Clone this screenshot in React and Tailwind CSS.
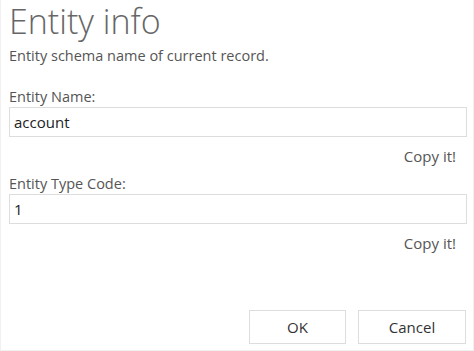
import React from 'react';

const Field = ({ label, value, first }) => (
  <div className={first ? 'mt-[21px]' : 'mt-[8px]'}>
    <label className="block text-[14.5px] leading-[20px] text-[#555]">{label}</label>
    <input
      readOnly
      value={value}
      className="block w-full h-[30px] border border-[#ddd] px-[4px] text-[15px] text-[#222] outline-none"
    />
    <div className="flex justify-end pr-[11px] mt-[9px]">
      <button className="text-[15px] leading-[20px] text-[#555]">Copy it!</button>
    </div>
  </div>
);

const App = () => {
  return (
    <div
      className="w-[474px] h-[351px] bg-white flex flex-col pl-2 pr-[6px] border-x border-b border-[#f0f0f0]"
      style={{ fontFamily: '"Open Sans", "Noto Sans", sans-serif' }}
    >
      <h1 className="-mt-[2px] text-[34px] leading-[46px] font-light text-[#666]">Entity info</h1>
      <p className="mt-[2px] text-[14.5px] leading-[20px] text-[#555]">
        Entity schema name of current record.
      </p>

      <Field first label="Entity Name:" value="account" />
      <Field label="Entity Type Code:" value="1" />

      <div className="mt-auto mb-[6px] flex justify-end gap-[12px] pr-[1px]">
        <button className="w-[97px] h-[34px] border border-[#ddd] text-[15px] text-[#333]">OK</button>
        <button className="w-[108px] h-[34px] border border-[#ddd] text-[15px] text-[#333]">Cancel</button>
      </div>
    </div>
  );
};

export default App;
